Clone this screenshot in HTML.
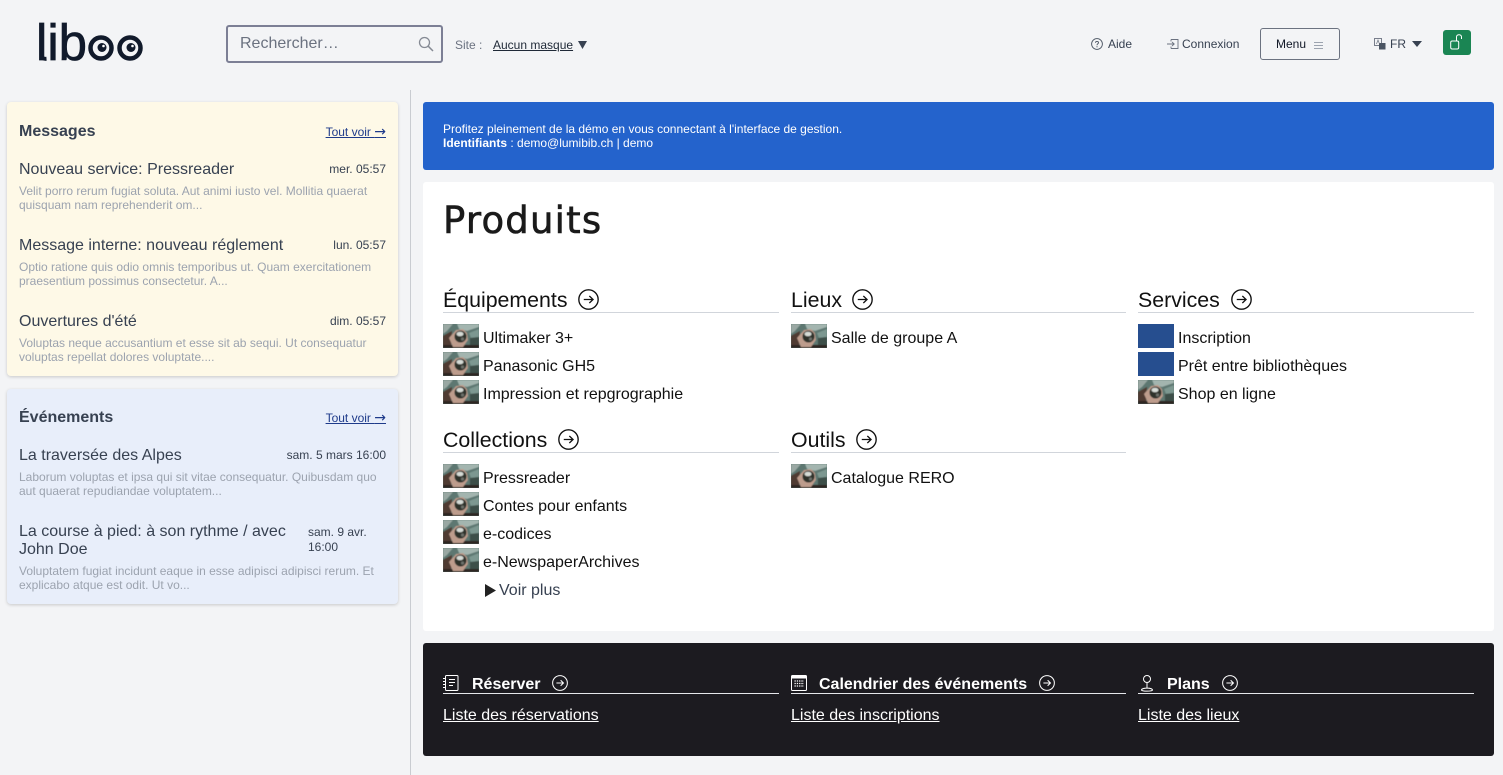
<!DOCTYPE html>
<html lang="fr">
<head>
<meta charset="utf-8">
<title>Liboo</title>
<style>
html,body{margin:0;padding:0;width:1503px;height:775px;overflow:hidden;background:#f3f4f6;font-family:"Liberation Sans",sans-serif;color:#111827}
body{position:relative}
.a,.t{position:absolute}
.t{white-space:nowrap}
a{color:inherit}
.card{position:absolute;left:7px;width:391px;border-radius:4px;box-shadow:0 1px 3px rgba(0,0,0,.18)}
.h2{font-size:16px;font-weight:700;color:#374151;line-height:20px}
.more{font-size:12px;line-height:14px;color:#1e3a8a;text-decoration:underline;text-align:right}
.more span{font-family:"DejaVu Sans",sans-serif;font-size:14px;line-height:12px}
.mt{font-size:16px;line-height:18px;color:#374151}
.md{font-size:12px;line-height:14px;color:#374151}
.sn{font-size:12px;line-height:14px;color:#9ca3af}
.cat{font-size:21.33px;line-height:26px;color:#111}
.rule{position:absolute;height:1px;background:#d1d5db;width:336px}
.it{font-size:16px;line-height:20px;color:#111}
.th{position:absolute;width:36px;height:24px;overflow:hidden}
.blue{position:absolute;width:36px;height:24px;background:#264e8f}
.bh{font-size:16px;font-weight:700;line-height:20px;color:#fff}
.bl{font-size:16px;line-height:20px;color:#fff;text-decoration:underline}
.wr{position:absolute;height:1px;background:#e5e7eb;width:336px}
svg{position:absolute;overflow:visible}
</style>
</head>
<body>
<svg width="0" height="0" style="position:absolute">
<defs>
<filter id="bl" x="-10%" y="-10%" width="120%" height="120%"><feGaussianBlur stdDeviation=".6"/></filter>
<symbol id="photo" viewBox="0 0 36 24">
<rect width="36" height="24" fill="#5d7771"/>
<g filter="url(#bl)">
<path d="M14 0H36V3L24 7 16 5Z" fill="#a3b5af"/>
<path d="M0 0H10L4 7 0 10Z" fill="#9aa8a3"/>
<path d="M26 9 36 5V13L28 14Z" fill="#7d9891"/>
<path d="M0 12 9 7 8 24H0Z" fill="#4f3b31"/>
<path d="M27 14 36 13V24H27Z" fill="#3e4f49"/>
<rect x="0" y="21" width="36" height="3" fill="#2f2620"/>
<path d="M6 14 13 6 20 5 24 9 25 16 20 23 10 23Z" fill="#bd9c8c"/>
<circle cx="17.500" cy="12.500" r="6" fill="#2d302c"/>
<ellipse cx="17" cy="10" rx="3.500" ry="2.300" fill="#d6dbd6"/>
<circle cx="19.500" cy="15" r="1.600" fill="#6d716b"/>
</g>
</symbol>
<symbol id="go" viewBox="0 0 20 20">
<circle cx="10" cy="10" r="9.200" fill="none" stroke="currentColor" stroke-width="1.300"/>
<path d="M5.500 10H14M10.800 6.600 14.300 10 10.800 13.400" fill="none" stroke="currentColor" stroke-width="1.300"/>
</symbol>
</defs>
</svg>

<!-- Logo -->
<svg style="left:30px;top:18px" width="120" height="48" viewBox="30 18 120 48" role="img">
<title>liboo</title>
<text x="36" y="60" font-family="Liberation Sans" font-size="51" fill="#111a2b" stroke="#111a2b" stroke-width=".7">lib</text>
<path d="M41.500 55C41.500 58 43.500 59 46.500 58.800" fill="none" stroke="#111a2b" stroke-width="4"/>
<g fill="none" stroke="#111a2b" stroke-width="4.500">
<circle cx="101" cy="48" r="10.500"/><circle cx="130" cy="48" r="10.500"/>
</g>
<circle cx="102" cy="47.500" r="4.500" fill="#111a2b"/><circle cx="131" cy="47.500" r="4.500" fill="#111a2b"/>
<circle cx="103.500" cy="46" r="1.300" fill="#fff"/><circle cx="132.500" cy="46" r="1.300" fill="#fff"/>
</svg>

<!-- Search -->
<div class="a" style="left:226px;top:25px;width:213px;height:34px;border:2px solid #7c7f95;border-radius:3px"></div>
<div class="t" style="left:240px;top:34px;font-size:16px;line-height:20px;color:#6b7280">Rechercher…</div>
<svg style="left:418px;top:36px" width="16" height="16" viewBox="0 0 16 16"><circle cx="6.500" cy="6.500" r="5" fill="none" stroke="#858a94" stroke-width="1.300"/><path d="M10.200 10.200 15 15" stroke="#858a94" stroke-width="1.500"/></svg>
<div class="t" style="left:455px;top:38px;font-size:12px;line-height:14px;color:#6b7280">Site :</div>
<div class="t" style="left:493px;top:38px;font-size:12px;line-height:14px;color:#1f2937;text-decoration:underline">Aucun masque</div>
<svg style="left:578px;top:41px" width="9" height="8" viewBox="0 0 9 8"><path d="M0 0H9L4.500 8Z" fill="#374151"/></svg>

<!-- Top right -->
<svg style="left:1091px;top:38px" width="12" height="12" viewBox="0 0 12 12"><circle cx="6" cy="6" r="5.400" fill="none" stroke="#4b5563" stroke-width=".9"/><path d="M4.500 4.700C4.500 3 7.500 3 7.500 4.700 7.500 5.800 6 5.800 6 7.200" fill="none" stroke="#4b5563" stroke-width=".9"/><circle cx="6" cy="8.800" r=".6" fill="#4b5563"/></svg>
<div class="t" style="left:1108px;top:37px;font-size:12px;line-height:14px;color:#374151">Aide</div>
<svg style="left:1167px;top:38px" width="12" height="12" viewBox="0 0 12 12"><path d="M4 1.500H11V10.500H4M4 3.500V1.500M4 8.500V10.500" fill="none" stroke="#6b7280" stroke-width=".9"/><path d="M0 6H7M5 4 7.200 6 5 8" fill="none" stroke="#6b7280" stroke-width=".9"/></svg>
<div class="t" style="left:1182px;top:37px;font-size:12px;line-height:14px;color:#374151">Connexion</div>
<div class="a" style="left:1260px;top:28px;width:78px;height:30px;border:1px solid #6b7280;border-radius:3px"></div>
<div class="t" style="left:1276px;top:37px;font-size:12px;line-height:14px;color:#111827">Menu</div>
<svg style="left:1314px;top:42px" width="9" height="8" viewBox="0 0 9 8"><path d="M0 .5H9M0 3.500H9M0 6.500H9" stroke="#9ca3af" stroke-width="1"/></svg>
<svg style="left:1374px;top:38px" width="12" height="12" viewBox="0 0 12 12"><rect x=".5" y=".5" width="7" height="7" fill="none" stroke="#6b7280" stroke-width=".9"/><rect x="5" y="5" width="6.500" height="6.500" fill="#4b5563"/><path d="M2.500 6 4 2 5.500 6" fill="none" stroke="#6b7280" stroke-width=".7"/></svg>
<div class="t" style="left:1390px;top:37px;font-size:12px;line-height:14px;color:#374151">FR</div>
<svg style="left:1412px;top:41px" width="10" height="6" viewBox="0 0 10 6"><path d="M0 0H10L5 6Z" fill="#374151"/></svg>
<div class="a" style="left:1443px;top:30px;width:28px;height:25px;background:#1a8553;border-radius:3px"></div>
<svg style="left:1450px;top:33px" width="15" height="18" viewBox="0 0 15 18"><rect x=".7" y="8" width="8" height="8" rx="1.500" fill="none" stroke="#fff" stroke-width="1"/><path d="M6.500 8V4C6.500 1 11.500 1 11.500 4V6" fill="none" stroke="#fff" stroke-width="1"/></svg>

<!-- Divider -->
<div class="a" style="left:410px;top:90px;width:1px;height:685px;background:#c9ccd1"></div>

<!-- Messages -->
<div class="card" style="top:102px;height:274px;background:#fef9e7"></div>
<div class="t h2" style="left:19px;top:122px">Messages</div>
<div class="t more" style="right:1117px;top:125px">Tout voir <span>→</span></div>
<div class="t mt" style="left:19px;top:161px">Nouveau service: Pressreader</div>
<div class="t md" style="right:1117px;top:162px">mer. 05:57</div>
<div class="t sn" style="left:19px;top:184px">Velit porro rerum fugiat soluta. Aut animi iusto vel. Mollitia quaerat<br>quisquam nam reprehenderit om...</div>
<div class="t mt" style="left:19px;top:237px">Message interne: nouveau réglement</div>
<div class="t md" style="right:1117px;top:238px">lun. 05:57</div>
<div class="t sn" style="left:19px;top:260px">Optio ratione quis odio omnis temporibus ut. Quam exercitationem<br>praesentium possimus consectetur. A...</div>
<div class="t mt" style="left:19px;top:313px">Ouvertures d'été</div>
<div class="t md" style="right:1117px;top:314px">dim. 05:57</div>
<div class="t sn" style="left:19px;top:336px">Voluptas neque accusantium et esse sit ab sequi. Ut consequatur<br>voluptas repellat dolores voluptate....</div>

<!-- Evenements -->
<div class="card" style="top:389px;height:215px;background:#e8eefa"></div>
<div class="t h2" style="left:19px;top:408px">Événements</div>
<div class="t more" style="right:1117px;top:411px">Tout voir <span>→</span></div>
<div class="t mt" style="left:19px;top:447px">La traversée des Alpes</div>
<div class="t md" style="right:1117px;top:448px">sam. 5 mars 16:00</div>
<div class="t sn" style="left:19px;top:470px">Laborum voluptas et ipsa qui sit vitae consequatur. Quibusdam quo<br>aut quaerat repudiandae voluptatem...</div>
<div class="t mt" style="left:19px;top:523px">La course à pied: à son rythme / avec<br>John Doe</div>
<div class="t md" style="left:308px;top:525px;line-height:15px">sam. 9 avr.<br>16:00</div>
<div class="t sn" style="left:19px;top:564px">Voluptatem fugiat incidunt eaque in esse adipisci adipisci rerum. Et<br>explicabo atque est odit. Ut vo...</div>

<!-- Banner -->
<div class="a" style="left:423px;top:102px;width:1071px;height:68px;background:#2463cc;border-radius:3px"></div>
<div class="t" style="left:443px;top:122px;font-size:12px;line-height:14px;color:#fff">Profitez pleinement de la démo en vous connectant à l'interface de gestion.<br><b>Identifiants</b> : demo@lumibib.ch | demo</div>

<!-- Products panel -->
<div class="a" style="left:423px;top:182px;width:1071px;height:449px;background:#fff;border-radius:3px"></div>
<div class="t" style="left:443px;top:199px;font-family:'DejaVu Sans',sans-serif;font-size:37px;letter-spacing:1.200px;line-height:44px;color:#1a1a1a;-webkit-text-stroke:.6px #1a1a1a">Produits</div>

<div class="t cat" style="left:443px;top:287px">Équipements</div>
<svg style="left:578px;top:289px;color:#111" width="21" height="21"><use href="#go" width="21" height="21"/></svg>
<div class="rule" style="left:443px;top:312px"></div>
<div class="t cat" style="left:791px;top:287px">Lieux</div>
<svg style="left:852px;top:289px;color:#111" width="21" height="21"><use href="#go" width="21" height="21"/></svg>
<div class="rule" style="left:791px;top:312px;width:335px"></div>
<div class="t cat" style="left:1138px;top:287px">Services</div>
<svg style="left:1231px;top:289px;color:#111" width="21" height="21"><use href="#go" width="21" height="21"/></svg>
<div class="rule" style="left:1138px;top:312px"></div>

<svg class="th" style="left:443px;top:324px"><use href="#photo" width="36" height="24"/></svg>
<div class="t it" style="left:483px;top:329px">Ultimaker 3+</div>
<svg class="th" style="left:443px;top:352px"><use href="#photo" width="36" height="24"/></svg>
<div class="t it" style="left:483px;top:357px">Panasonic GH5</div>
<svg class="th" style="left:443px;top:380px"><use href="#photo" width="36" height="24"/></svg>
<div class="t it" style="left:483px;top:385px">Impression et repgrographie</div>

<svg class="th" style="left:791px;top:324px"><use href="#photo" width="36" height="24"/></svg>
<div class="t it" style="left:831px;top:329px">Salle de groupe A</div>

<div class="blue" style="left:1138px;top:324px"></div>
<div class="t it" style="left:1178px;top:329px">Inscription</div>
<div class="blue" style="left:1138px;top:352px"></div>
<div class="t it" style="left:1178px;top:357px">Prêt entre bibliothèques</div>
<svg class="th" style="left:1138px;top:380px"><use href="#photo" width="36" height="24"/></svg>
<div class="t it" style="left:1178px;top:385px">Shop en ligne</div>

<div class="t cat" style="left:443px;top:427px">Collections</div>
<svg style="left:558px;top:429px;color:#111" width="21" height="21"><use href="#go" width="21" height="21"/></svg>
<div class="rule" style="left:443px;top:452px"></div>
<div class="t cat" style="left:791px;top:427px">Outils</div>
<svg style="left:856px;top:429px;color:#111" width="21" height="21"><use href="#go" width="21" height="21"/></svg>
<div class="rule" style="left:791px;top:452px;width:335px"></div>

<svg class="th" style="left:443px;top:464px"><use href="#photo" width="36" height="24"/></svg>
<div class="t it" style="left:483px;top:469px">Pressreader</div>
<svg class="th" style="left:443px;top:492px"><use href="#photo" width="36" height="24"/></svg>
<div class="t it" style="left:483px;top:497px">Contes pour enfants</div>
<svg class="th" style="left:443px;top:520px"><use href="#photo" width="36" height="24"/></svg>
<div class="t it" style="left:483px;top:525px">e-codices</div>
<svg class="th" style="left:443px;top:548px"><use href="#photo" width="36" height="24"/></svg>
<div class="t it" style="left:483px;top:553px">e-NewspaperArchives</div>
<svg style="left:485px;top:584px" width="11" height="13" viewBox="0 0 11 13"><path d="M0 0 11 6.500 0 13Z" fill="#222"/></svg>
<div class="t it" style="left:499px;top:581px;color:#374151">Voir plus</div>

<svg class="th" style="left:791px;top:464px"><use href="#photo" width="36" height="24"/></svg>
<div class="t it" style="left:831px;top:469px">Catalogue RERO</div>

<!-- Dark panel -->
<div class="a" style="left:423px;top:643px;width:1071px;height:113px;background:#1c1b20;border-radius:3px"></div>
<svg style="left:443px;top:675px" width="16" height="16" viewBox="0 0 16 16" fill="none" stroke="#fff" stroke-width="1"><rect x="2.500" y=".5" width="12.500" height="15" rx="1"/><path d="M6 4.500H12M6 7.500H12M6 10.500H10M0 3.500H2.500M0 6.500H2.500M0 9.500H2.500M0 12.500H2.500"/></svg>
<div class="t bh" style="left:472px;top:675px">Réserver</div>
<svg style="left:552px;top:675px;color:#fff" width="16" height="16"><use href="#go" width="16" height="16"/></svg>
<div class="wr" style="left:443px;top:693px"></div>
<div class="t bl" style="left:443px;top:706px">Liste des réservations</div>

<svg style="left:791px;top:675px" width="16" height="16" viewBox="0 0 16 16"><rect x=".5" y=".5" width="15" height="15" rx="1" fill="none" stroke="#fff"/><rect x="1" y="1" width="14" height="2.500" fill="#fff"/><path d="M3.500 6H13M3.500 8.500H13M3.500 11H13" stroke="#fff" stroke-width="1.200" stroke-dasharray="1.300 1"/></svg>
<div class="t bh" style="left:819px;top:675px">Calendrier des événements</div>
<svg style="left:1039px;top:675px;color:#fff" width="16" height="16"><use href="#go" width="16" height="16"/></svg>
<div class="wr" style="left:791px;top:693px;width:335px"></div>
<div class="t bl" style="left:791px;top:706px">Liste des inscriptions</div>

<svg style="left:1141px;top:675px" width="12" height="17" viewBox="0 0 12 17" fill="none" stroke="#fff" stroke-width="1"><circle cx="6" cy="4" r="3.500"/><path d="M6 7.500V13"/><path d="M.5 15C.5 12.500 11.500 12.500 11.500 15 11.500 16.500 .5 16.500 .5 15Z"/></svg>
<div class="t bh" style="left:1167px;top:675px">Plans</div>
<svg style="left:1222px;top:675px;color:#fff" width="16" height="16"><use href="#go" width="16" height="16"/></svg>
<div class="wr" style="left:1138px;top:693px"></div>
<div class="t bl" style="left:1138px;top:706px">Liste des lieux</div>
</body>
</html>
